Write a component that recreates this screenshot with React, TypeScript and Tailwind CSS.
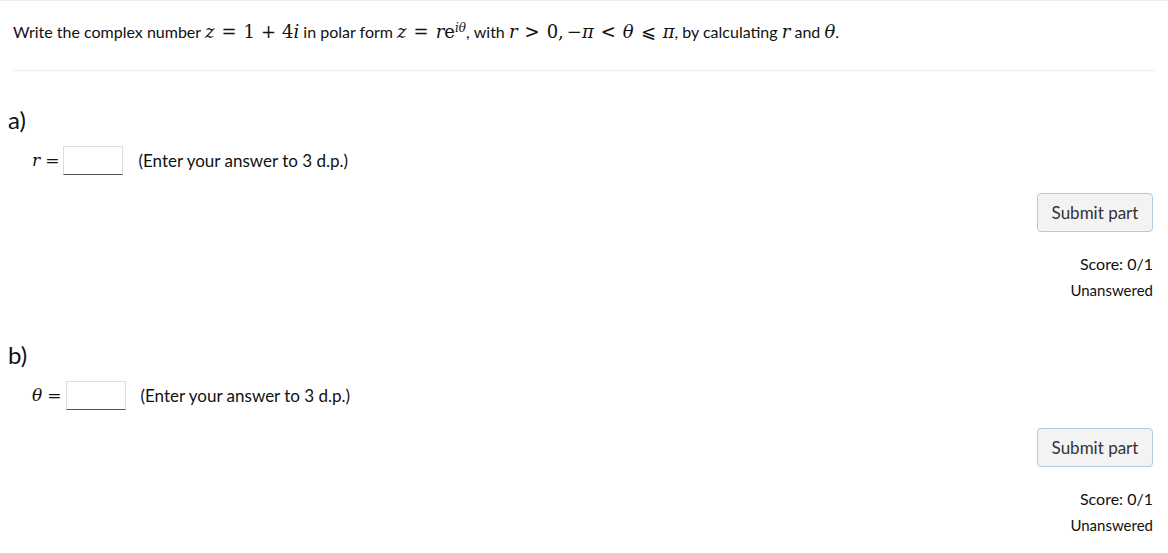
const sans = "font-['Lato','Noto_Sans',sans-serif]";
const math = "font-['DejaVu_Serif','Liberation_Serif',serif]";

function M({ children }: { children: React.ReactNode }) {
  return <span className={`${math} text-[18px] leading-5 tracking-normal`}>{children}</span>;
}

function V({ children }: { children: React.ReactNode }) {
  return <i>{children}</i>;
}

// relation / binary operator with TeX-ish spacing
function Rel({ children }: { children: React.ReactNode }) {
  return <span className="mx-[7px]">{children}</span>;
}

function Bin({ children }: { children: React.ReactNode }) {
  return <span className="mx-[6px]">{children}</span>;
}

function Part({ label, symbol }: { label: string; symbol: React.ReactNode }) {
  return (
    <section>
      <h2 className="pl-2 text-[24px] leading-8 text-[#111]">{label}</h2>
      <div className="mt-[10px] flex items-center pl-[32px]">
        <span className={`${math} whitespace-nowrap text-[17px]`}>
          {symbol}
          <span className="ml-[5px]">=</span>
        </span>
        <input className="ml-[4px] h-[29px] w-[60px] border border-[#ddd] border-b-[#555] bg-white outline-none" />
        <span className="ml-[15px] text-[17px]">(Enter your answer to 3 d.p.)</span>
      </div>
      <div className="mt-[18px] flex flex-col items-end pr-[15px]">
        <button className="h-[39px] w-[116px] rounded-[4px] border border-[#a9cbe6] bg-[#f3f3f3] text-[17px] text-[#333]">
          Submit part
        </button>
        <p className="mt-[20px] text-[16px] leading-6">Score: 0/1</p>
        <p className="mt-[4px] text-[15px] leading-5">Unanswered</p>
      </div>
    </section>
  );
}

export default function App() {
  return (
    <div className={`${sans} min-h-[553px] border-t border-[#eee] bg-white text-[#111]`}>
      <div className="mx-[13px] border-b border-[#eee] pt-[19px] pb-[26px]">
        <p className="text-[16px] leading-6">
          Write the complex number{" "}
          <M>
            <V>z</V>
            <Rel>=</Rel>1<Bin>+</Bin>4<V>i</V>
          </M>{" "}
          in polar form{" "}
          <M>
            <V>z</V>
            <Rel>=</Rel>
            <V>r</V>e<sup className="text-[12px]"><V>iθ</V></sup>
          </M>
          , with{" "}
          <M>
            <V>r</V>
            <Rel>&gt;</Rel>0,<span className="ml-[3px]">−</span>
            <V>π</V>
            <Rel>&lt;</Rel>
            <V>θ</V>
            <Rel>⩽</Rel>
            <V>π</V>
          </M>
          , by calculating <M><V>r</V></M> and <M><V>θ</V></M>.
        </p>
      </div>
      <div className="pt-[33px]">
        <Part label="a)" symbol={<V>r</V>} />
        <div className="mt-[39px]">
          <Part label="b)" symbol={<V>θ</V>} />
        </div>
      </div>
    </div>
  );
}
